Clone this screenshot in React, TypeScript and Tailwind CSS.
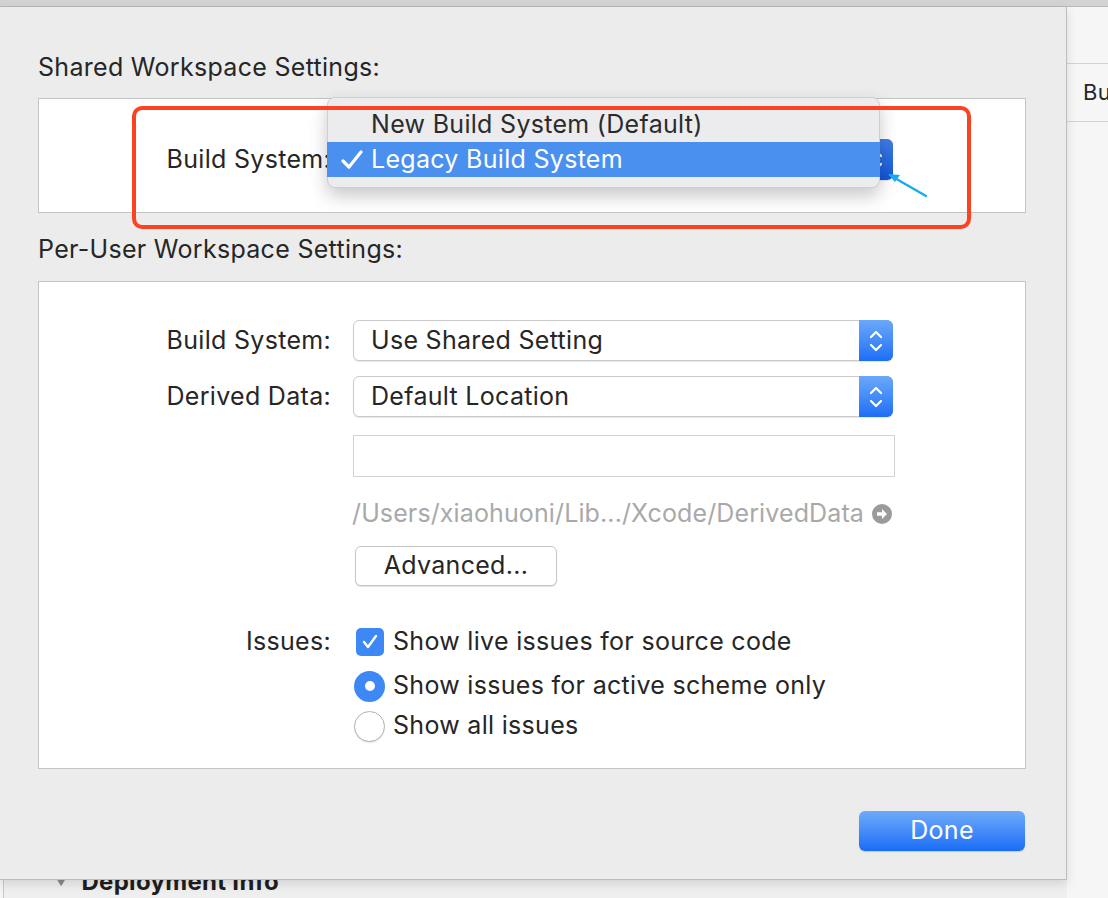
import React from "react";

function Stepper() {
  return (
    <svg width="16" height="26" viewBox="0 0 16 26" fill="none" aria-hidden>
      <polyline points="3,9 8,4 13,9" stroke="white" strokeWidth="2.2" strokeLinecap="round" strokeLinejoin="round" />
      <polyline points="3,17 8,22 13,17" stroke="white" strokeWidth="2.2" strokeLinecap="round" strokeLinejoin="round" />
    </svg>
  );
}

function Popup({ label, pressed }: { label: string; pressed?: boolean }) {
  return (
    <div className="flex h-[41px] w-[540px] items-stretch rounded-[6px] border border-[#cbcbcb] bg-white shadow-[0_1px_1px_rgba(0,0,0,0.10)]">
      <span className="flex flex-1 items-center pl-[17px] text-[25px] text-[#262626]">{label}</span>
      <span
        className={
          pressed
            ? "-my-px -mr-px flex w-[34px] items-center justify-center rounded-r-[6px] bg-gradient-to-b from-[#3f7fe8] to-[#1454d6]"
            : "-my-px -mr-px flex w-[34px] items-center justify-center rounded-r-[6px] bg-gradient-to-b from-[#6aa8fa] to-[#1c6ef6]"
        }
      >
        <Stepper />
      </span>
    </div>
  );
}

function Label({ children }: { children: React.ReactNode }) {
  return <span className="text-right text-[25px] text-[#262626]">{children}</span>;
}

export default function App() {
  return (
    <div className="flex h-[898px] w-[1108px] flex-col overflow-hidden bg-[#f4f4f4] font-[Inter,sans-serif] tracking-[0.3px] text-[#262626]">
      <div className="h-[7px] shrink-0 border-b border-[#b9b9b9] bg-[#d3d3d3]" />
      <div className="flex flex-1">
        <div className="flex w-[1067px] shrink-0 flex-col">
          {/* sheet */}
          <div className="relative z-10 flex h-[873px] flex-col border-r border-b border-[#bdbdbd] bg-[#ececec] pt-[45px] pl-[38px] pr-[40px] shadow-[0_4px_10px_rgba(0,0,0,0.12)]">
            <h2 className="h-[30px] text-[25px] leading-[30px] font-normal">Shared Workspace Settings:</h2>

            <div className="relative mt-[16px] grid h-[115px] grid-cols-[292px_540px] content-start gap-x-[22px] border border-[#c4c4c4] bg-white pt-[40px]">
              <div className="flex h-[41px] items-center justify-end">
                <Label>Build System:</Label>
              </div>
              <Popup label="Legacy Build System" pressed />

              {/* open menu */}
              <div className="absolute top-[-2px] left-[288px] z-20 h-[91px] w-[553px] rounded-[8px] border border-[#cfcfcf] bg-[#ececef] pt-[9px] shadow-[0_8px_18px_rgba(0,0,0,0.22)]">
                <div className="flex h-[35px] items-center pl-[43px] text-[25px] text-[#2b2b2b]">New Build System (Default)</div>
                <div className="-mx-px flex h-[35px] items-center bg-[#4a90ef] text-[25px] text-white">
                  <span className="flex w-[44px] justify-center pl-[6px]">
                    <svg width="22" height="20" viewBox="0 0 22 20" fill="none" aria-hidden>
                      <polyline points="2,11 8,17 20,2" stroke="white" strokeWidth="3.2" strokeLinecap="round" strokeLinejoin="round" />
                    </svg>
                  </span>
                  Legacy Build System
                </div>
              </div>

              {/* annotation */}
              <div className="pointer-events-none absolute top-[7px] left-[93px] z-30 h-[123px] w-[839px] rounded-[10px] border-[4px] border-[#fb4322]" />
              <svg className="pointer-events-none absolute top-[70px] left-[845px] z-30" width="50" height="32" viewBox="0 0 50 32" fill="none" aria-hidden>
                <line x1="42" y1="27" x2="9" y2="8" stroke="#18a9f2" strokeWidth="2.4" strokeLinecap="round" />
                <polygon points="4,5 16,6 11,13" fill="#18a9f2" />
              </svg>
            </div>

            <h2 className="mt-[21px] h-[30px] text-[25px] leading-[30px] font-normal">Per-User Workspace Settings:</h2>

            <div className="mt-[17px] grid h-[488px] grid-cols-[292px_542px] content-start gap-x-[22px] border border-[#c4c4c4] bg-white pt-[38px]">
              <div className="flex h-[41px] items-center justify-end">
                <Label>Build System:</Label>
              </div>
              <Popup label="Use Shared Setting" />

              <div className="mt-[15px] flex h-[41px] items-center justify-end">
                <Label>Derived Data:</Label>
              </div>
              <div className="mt-[15px]">
                <Popup label="Default Location" />
              </div>

              <div />
              <div className="mt-[18px] h-[42px] border border-[#d2d2d2] bg-white" />

              <div />
              <div className="-ml-px mt-[22px] flex h-[30px] items-center gap-[8px]">
                <span className="whitespace-nowrap text-[25px] tracking-[0.12px] text-[#a9a9a9]">/Users/xiaohuoni/Lib.../Xcode/DerivedData</span>
                <svg className="shrink-0" width="20" height="20" viewBox="0 0 20 20" aria-hidden>
                  <circle cx="10" cy="10" r="10" fill="#9b9b9b" />
                  <path d="M5 8.3h5V5l5 5-5 5v-3.3H5z" fill="white" />
                </svg>
              </div>

              <div />
              <div className="mt-[17px]">
                <button className="ml-[2px] h-[40px] w-[202px] rounded-[6px] border border-[#c6c6c6] bg-white text-[25px] tracking-[0.3px] text-[#262626] shadow-[0_1px_1px_rgba(0,0,0,0.12)]">
                  Advanced...
                </button>
              </div>

              <div className="mt-[41px] flex h-[30px] items-center justify-end">
                <Label>Issues:</Label>
              </div>
              <div className="mt-[41px] flex flex-col">
                <div className="flex h-[30px] items-center gap-[9px] pl-[3px]">
                  <span className="flex h-[28px] w-[28px] items-center justify-center rounded-[5px] bg-[#3d88f5]">
                    <svg width="18" height="16" viewBox="0 0 18 16" fill="none" aria-hidden>
                      <polyline points="3,8 7,13 15,2" stroke="white" strokeWidth="2.4" strokeLinecap="round" strokeLinejoin="round" />
                    </svg>
                  </span>
                  <span className="text-[25px]">Show live issues for source code</span>
                </div>
                <div className="mt-[13px] flex h-[32px] items-center gap-[8px] pl-px">
                  <span className="flex h-[31px] w-[31px] items-center justify-center rounded-full bg-[#3d88f5]">
                    <span className="h-[10px] w-[10px] rounded-full bg-white" />
                  </span>
                  <span className="text-[25px]">Show issues for active scheme only</span>
                </div>
                <div className="mt-[8px] flex h-[32px] items-center gap-[8px] pl-px">
                  <span className="h-[31px] w-[31px] rounded-full border border-[#b3b3b3] bg-white shadow-[0_1px_1px_rgba(0,0,0,0.1)]" />
                  <span className="text-[25px]">Show all issues</span>
                </div>
              </div>
            </div>

            <div className="mt-[42px] flex justify-end pr-px">
              <button className="h-[40px] w-[166px] rounded-[6px] bg-gradient-to-b from-[#6eaafa] to-[#176cf6] text-[25px] tracking-[0.3px] text-white shadow-[0_1px_1px_rgba(0,0,0,0.15)]">
                Done
              </button>
            </div>
          </div>

          {/* window below the sheet */}
          <div className="ml-[3px] h-[18px] overflow-hidden border-l border-[#c8c8c8] bg-[#efefef]">
            <div className="-mt-[13px] flex items-center gap-[14px] pl-[51px]">
              <span className="text-[12px] text-[#8a8a8a]">▼</span>
              <span className="text-[24px] leading-[30px] font-bold text-[#1e1e1e]">Deployment Info</span>
            </div>
          </div>
        </div>

        {/* background window to the right */}
        <div className="flex min-w-0 flex-1 flex-col bg-[#f6f6f6]">
          <div className="h-[57px] border-b border-[#d3d3d3]" />
          <div className="flex h-[58px] items-center border-b border-[#d3d3d3] pl-[16px] text-[22px] text-[#262626]">
            Bu
          </div>
        </div>
      </div>
    </div>
  );
}
